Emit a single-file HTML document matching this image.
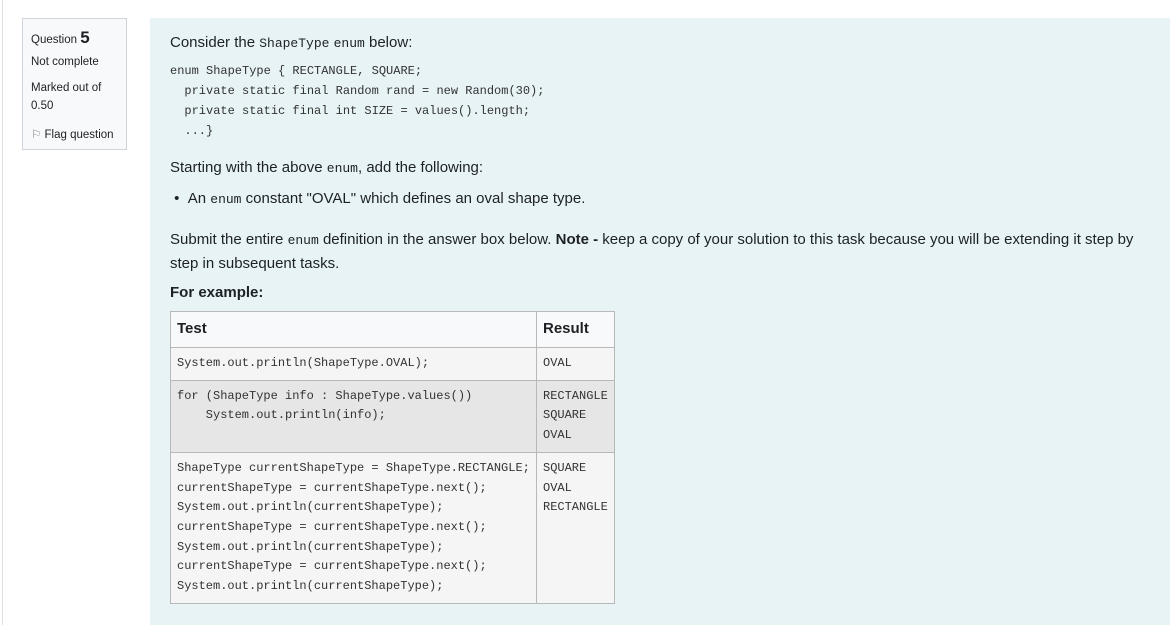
<!DOCTYPE html>
<html><head><style>
*{margin:0;padding:0;box-sizing:border-box}
body{width:1170px;height:625px;background:#fff;font-family:"Liberation Sans",sans-serif;color:#1d2125;position:relative;overflow:hidden}
.vl{position:absolute;left:2px;top:0;width:1px;height:625px;background:#dee2e6}
.info{position:absolute;left:22px;top:18px;width:105px;height:132px;background:#f8f9fa;border:1px solid #cfd4da;font-size:11.5px;padding:10px 0 0 8px;color:#1d2125}
.info div{position:absolute;left:8px}
.main{position:absolute;left:150px;top:18px;width:1020px;height:607px;background:#e7f3f5}
.t{position:absolute;left:20px;font-size:15px;white-space:nowrap}
.m{font-family:"Liberation Mono",monospace;font-size:13px}
pre{position:absolute;left:20px;top:43px;font-family:"Liberation Mono",monospace;font-size:12px;line-height:20px;color:#333}
table{position:absolute;left:20px;top:293px;border-collapse:collapse;font-size:12px}
td,th{border:1px solid #b8b8b8;vertical-align:top;text-align:left}
th{background:#f8f9fa;font-size:15px;height:36px;padding:8px 6px}
td{font-family:"Liberation Mono",monospace;line-height:19.7px;padding:6px 6px;color:#333}
tr.a td{background:#f5f5f5}tr.b td{background:#e6e6e6}
</style></head><body>
<div class="vl"></div>
<div class="info">
<div style="top:9px">Question <b style="font-size:17px">5</b></div>
<div style="top:37px">Not complete</div>
<div style="top:63px">Marked out of</div>
<div style="top:81px">0.50</div>
<div style="top:108px"><span style="color:#888">⚐</span> Flag question</div>
</div>
<div class="main">
<div class="t" style="top:16px">Consider the <span class="m">ShapeType</span> <span class="m">enum</span> below:</div>
<pre>enum ShapeType { RECTANGLE, SQUARE;
  private static final Random rand = new Random(30);
  private static final int SIZE = values().length;
  ...}</pre>
<div class="t" style="top:141px">Starting with the above <span class="m">enum</span>, add the following:</div>
<div class="t" style="top:172px">&nbsp;•&nbsp;&nbsp;An <span class="m">enum</span> constant "OVAL" which defines an oval shape type.</div>
<div class="t" style="top:213px">Submit the entire <span class="m">enum</span> definition in the answer box below. <b>Note -</b> keep a copy of your solution to this task because you will be extending it step by</div>
<div class="t" style="top:237px">step in subsequent tasks.</div>
<div class="t" style="top:266px"><b>For example:</b></div>
<table>
<tr><th style="width:366px">Test</th><th style="width:78px">Result</th></tr>
<tr class="a"><td style="height:32px">System.out.println(ShapeType.OVAL);</td><td>OVAL</td></tr>
<tr class="b"><td style="height:72px">for (ShapeType info : ShapeType.values())<br>&nbsp;&nbsp;&nbsp;&nbsp;System.out.println(info);</td><td>RECTANGLE<br>SQUARE<br>OVAL</td></tr>
<tr class="a"><td style="height:151px">ShapeType currentShapeType = ShapeType.RECTANGLE;<br>currentShapeType = currentShapeType.next();<br>System.out.println(currentShapeType);<br>currentShapeType = currentShapeType.next();<br>System.out.println(currentShapeType);<br>currentShapeType = currentShapeType.next();<br>System.out.println(currentShapeType);</td><td>SQUARE<br>OVAL<br>RECTANGLE</td></tr>
</table>
</div>
</body></html>
